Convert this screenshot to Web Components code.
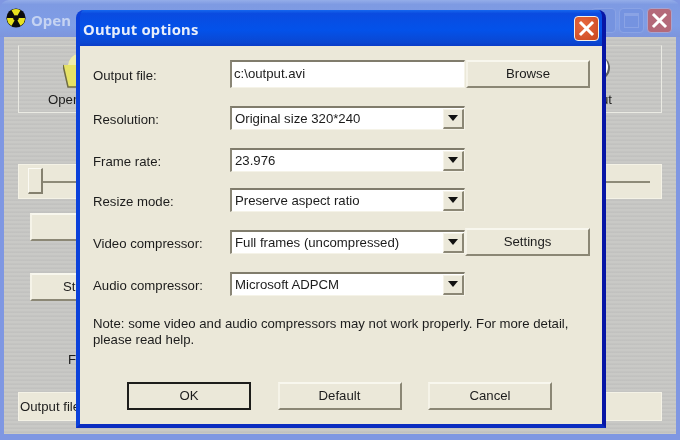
<!DOCTYPE html>
<html>
<head>
<meta charset="utf-8">
<style>
html, body { margin: 0; padding: 0; width: 680px; height: 440px; overflow: hidden; }
body { font-family: "Liberation Sans", Arial, sans-serif; font-size: 13.2px; color: #1c1c1c; }
</style>
</head>
<body>
<main-window></main-window>

<script>
class XpButton extends HTMLElement {
  constructor() {
    super();
    this.attachShadow({ mode: 'open' }).innerHTML = `
    <style>
      :host { display: flex; align-items: center; justify-content: center; box-sizing: border-box; height: 28px; padding-bottom: 1px;
        background: #ebe8d9; border-top: 2px solid #f8f7ee; border-left: 2px solid #f5f3e8;
        border-right: 2px solid #8b8775; border-bottom: 2px solid #8b8775; }
      :host([default]) { outline: 2px solid #1d1d1b; outline-offset: -2px; }
    </style>
    <slot></slot>`;
  }
}
customElements.define('xp-button', XpButton);

class XpField extends HTMLElement {
  constructor() {
    super();
    this.attachShadow({ mode: 'open' }).innerHTML = `
    <style>
      :host { display: flex; align-items: center; box-sizing: border-box; height: 28px; padding: 0 0 3px 2px; background: #fff;
        border-top: 2px solid #807c6c; border-left: 2px solid #8a8676; border-right: 1px solid #f5f3e8; border-bottom: 1px solid #f5f3e8; }
    </style>
    <slot></slot>`;
  }
}
customElements.define('xp-field', XpField);

class XpCombo extends HTMLElement {
  constructor() {
    super();
    this.attachShadow({ mode: 'open' }).innerHTML = `
    <style>
      :host { display: flex; align-items: center; box-sizing: border-box; height: 24px; padding-left: 3px; background: #fff;
        border-top: 2px solid #807c6c; border-left: 2px solid #8a8676; border-right: 1px solid #f5f3e8; border-bottom: 1px solid #f5f3e8; }
      .text { flex: 1; white-space: nowrap; margin-top: -1px; }
      .arrow { display: flex; align-items: center; justify-content: center; box-sizing: border-box; width: 21px; height: 20px;
        background: #ebe8d9; border-top: 1px solid #f5f3e8; border-left: 1px solid #f5f3e8;
        border-right: 2px solid #8b8775; border-bottom: 2px solid #8b8775; }
      .arrow i { width: 0; height: 0; border-left: 5px solid transparent; border-right: 5px solid transparent; border-top: 6px solid #111; }
    </style>
    <span class="text"><slot></slot></span>
    <span class="arrow"><i></i></span>`;
  }
}
customElements.define('xp-combo', XpCombo);

class CloseButton extends HTMLElement {
  constructor() {
    super();
    this.attachShadow({ mode: 'open' }).innerHTML = `
    <style>
      :host { display: block; box-sizing: border-box; width: 25px; height: 25px; border-radius: 4px; border: 1px solid var(--edge, #f2efe8);
        background: var(--face, radial-gradient(circle at 35% 35%, #e8693f, #c9461f)); }
      svg { display: block; width: 100%; height: 100%; }
    </style>
    <svg viewBox="0 0 23 23"><path d="M6 6L17 17M17 6L6 17" stroke="#fff" stroke-width="3" stroke-linecap="square" fill="none"/></svg>`;
  }
}
customElements.define('close-button', CloseButton);

class OutputDialog extends HTMLElement {
  constructor() {
    super();
    this.attachShadow({ mode: 'open' }).innerHTML = `
    <style>
      :host { position: absolute; left: 76px; top: 10px; width: 530px; height: 418px; box-sizing: border-box; display: flex; flex-direction: column;
        border-radius: 8px 8px 0 0; overflow: hidden; background: #0a3ed6;
        border-right: 4px solid #0716a6; border-bottom: 4px solid #0a2cc0; border-left: 4px solid #0b41da; }
      .title { height: 36px; flex: none; display: flex; align-items: center; justify-content: space-between; padding: 1px 3px 0 3px; box-sizing: border-box;
        background: linear-gradient(#1667ee 0, #0a4be0 10%, #0352ea 55%, #0a47d2 90%, #0a3cc8 100%);
        color: #e8eefa; font-family: "Noto Sans", sans-serif; font-weight: 700; font-size: 14.8px; letter-spacing: 0.2px; }
      .body { flex: 1; background: #ebe8d9; padding: 14px 0 0 13px; display: flex; flex-direction: column; }
      .rows { display: grid; grid-template-columns: 137px 235px 125px; row-gap: 18px; align-items: center; }
      .rows .label { padding-top: 2px; }
      .rows .shift { margin-top: -2px; }
      .rows .over { margin: -2px 0; }
      .note { margin: 20px 0 0; line-height: 16px; width: 490px; }
      .actions { display: grid; grid-template-columns: repeat(3, 124px); column-gap: 26.5px; margin: 34px 0 0 34px; }
      .wide { margin-left: 1px; }
    </style>
    <div class="title"><span>Output options</span><close-button></close-button></div>
    <div class="body">
      <div class="rows">
        <span class="label">Output file:</span><xp-field>c:\\output.avi</xp-field><xp-button class="wide">Browse</xp-button>
        <span class="label">Resolution:</span><xp-combo>Original size 320*240</xp-combo><span></span>
        <span class="label">Frame rate:</span><xp-combo>23.976</xp-combo><span></span>
        <span class="label shift">Resize mode:</span><xp-combo class="shift">Preserve aspect ratio</xp-combo><span></span>
        <span class="label">Video compressor:</span><xp-combo>Full frames (uncompressed)</xp-combo><xp-button class="over">Settings</xp-button>
        <span class="label">Audio compressor:</span><xp-combo>Microsoft ADPCM</xp-combo><span></span>
      </div>
      <p class="note">Note: some video and audio compressors may not work properly. For more detail, please read help.</p>
      <div class="actions">
        <xp-button default>OK</xp-button>
        <xp-button>Default</xp-button>
        <xp-button>Cancel</xp-button>
      </div>
    </div>`;
  }
}
customElements.define('output-dialog', OutputDialog);

class MainWindow extends HTMLElement {
  constructor() {
    super();
    this.attachShadow({ mode: 'open' }).innerHTML = `
    <style>
      :host { display: flex; flex-direction: column; position: relative; width: 680px; height: 440px; box-sizing: border-box;
        background: #7f97e2; padding: 0 4px 6px 4px; filter: blur(0.3px); }
      .bar { height: 37px; flex: none; margin: 0 -4px; padding: 3px 8px 0 6px; box-sizing: border-box; display: flex; align-items: center; gap: 3px;
        border-radius: 9px 9px 0 0; background: linear-gradient(#94ade9 0, #7e9ae2 12%, #7f9de6 70%, #7d95dc 100%); }
      .bar svg { width: 20px; height: 20px; flex: none; margin: -5px 2px 0 0; }
      .bar b { font-family: "Noto Sans", sans-serif; font-size: 15px; color: #c5d3f2; flex: 1; }
      .ctl { width: 25px; height: 25px; box-sizing: border-box; border-radius: 4px; border: 1px solid #8aa3e5; background: #7593e0; }
      .ctl.max { box-shadow: inset 0 0 0 4px #7593e0, inset 0 0 0 5px #8aa3e5, inset 0 3px 0 4px #8aa3e5; }
      .bar close-button { --face: #b4697a; --edge: #a7a3cf; }
      .client { flex: 1; position: relative; padding: 8px 14px 0; display: flex; flex-direction: column;
        background: repeating-linear-gradient(#c9c9c6 0, #c9c9c6 2px, #bfbfbd 3px, #c4c4c2 4px); }
      .panel { box-sizing: border-box; border: 1px solid #eaeae3; border-top-color: #d3d3cd; }
      .tools { height: 68px; display: flex; justify-content: space-between; padding: 0 49px 0 29px; }
      .tool { display: flex; flex-direction: column; align-items: flex-start; gap: 3px; padding-top: 7px; width: 50px; }
      .tool svg { width: 30px; height: 36px; margin-left: 15px; }
      .tool.save { align-items: flex-end; width: 26px; }
      .tool.save svg { width: 26px; height: 36px; margin-left: 0; }
      .slider { margin-top: 51px; height: 35px; position: relative; background: #ebe8d9; border-color: #f4f2e6; display: flex; align-items: center; }
      .slider .track { position: absolute; left: 17px; right: 11px; top: 16px; height: 2px; background: #8d8a78; }
      .slider .thumb { position: absolute; left: 9px; top: 3px; width: 15px; height: 26px; box-sizing: border-box; background: #ebe8d9; border-left: 1px solid #fbfaf3; border-top: 1px solid #fbfaf3; border-right: 2px solid #85816f; border-bottom: 2px solid #85816f; }
      .big { width: 100px; height: 28px; margin: 14px 0 0 12px; }
      .second { margin-top: 32px; justify-content: flex-start; padding-left: 31px; }
      .pct { margin: 51px 0 0 50px; }
      .status { margin-top: 25px; height: 29px; box-sizing: border-box; background: #ebe8d9; border-color: #f4f2e6; display: flex; align-items: center; padding-left: 1px; }
    </style>
    <div class="bar">
      <svg viewBox="0 0 20 20"><circle cx="10" cy="10" r="9.6" fill="#0c0c0c"/>
        <path d="M10 10L5.5 2.2A9 9 0 0 1 14.5 2.2ZM10 10L19 10A9 9 0 0 1 14.5 17.8ZM10 10L5.5 17.8A9 9 0 0 1 1 10Z" fill="#e8e21e"/>
        <circle cx="10" cy="10" r="2.8" fill="#0c0c0c"/></svg>
      <b>Open</b>
      <span class="ctl"></span><span class="ctl max"></span><close-button></close-button>
    </div>
    <div class="client">
      <div class="panel tools">
        <div class="tool">
          <svg viewBox="0 0 30 36"><path d="M5 12Q7 2 15 1H30V12Z" fill="#eeeca8"/><path d="M0 12H30V34H5Z" fill="#e6e266"/><path d="M0 12L5 34H30" fill="none" stroke="#6f6c45" stroke-width="1.5"/></svg>
          <span>Open</span>
        </div>
        <div class="tool save">
          <svg viewBox="0 0 26 36"><circle cx="12" cy="15" r="12" fill="#5f5f5f"/><circle cx="10" cy="14" r="12" fill="#fff"/></svg>
          <span>ut</span>
        </div>
      </div>
      <div class="panel slider"><div class="track"></div><div class="thumb"></div></div>
      <xp-button class="big"></xp-button>
      <xp-button class="big second">St</xp-button>
      <span class="pct">F</span>
      <div class="panel status">Output file</div>
    </div>
    <output-dialog></output-dialog>`;
  }
}
customElements.define('main-window', MainWindow);
</script>
</body>
</html>
